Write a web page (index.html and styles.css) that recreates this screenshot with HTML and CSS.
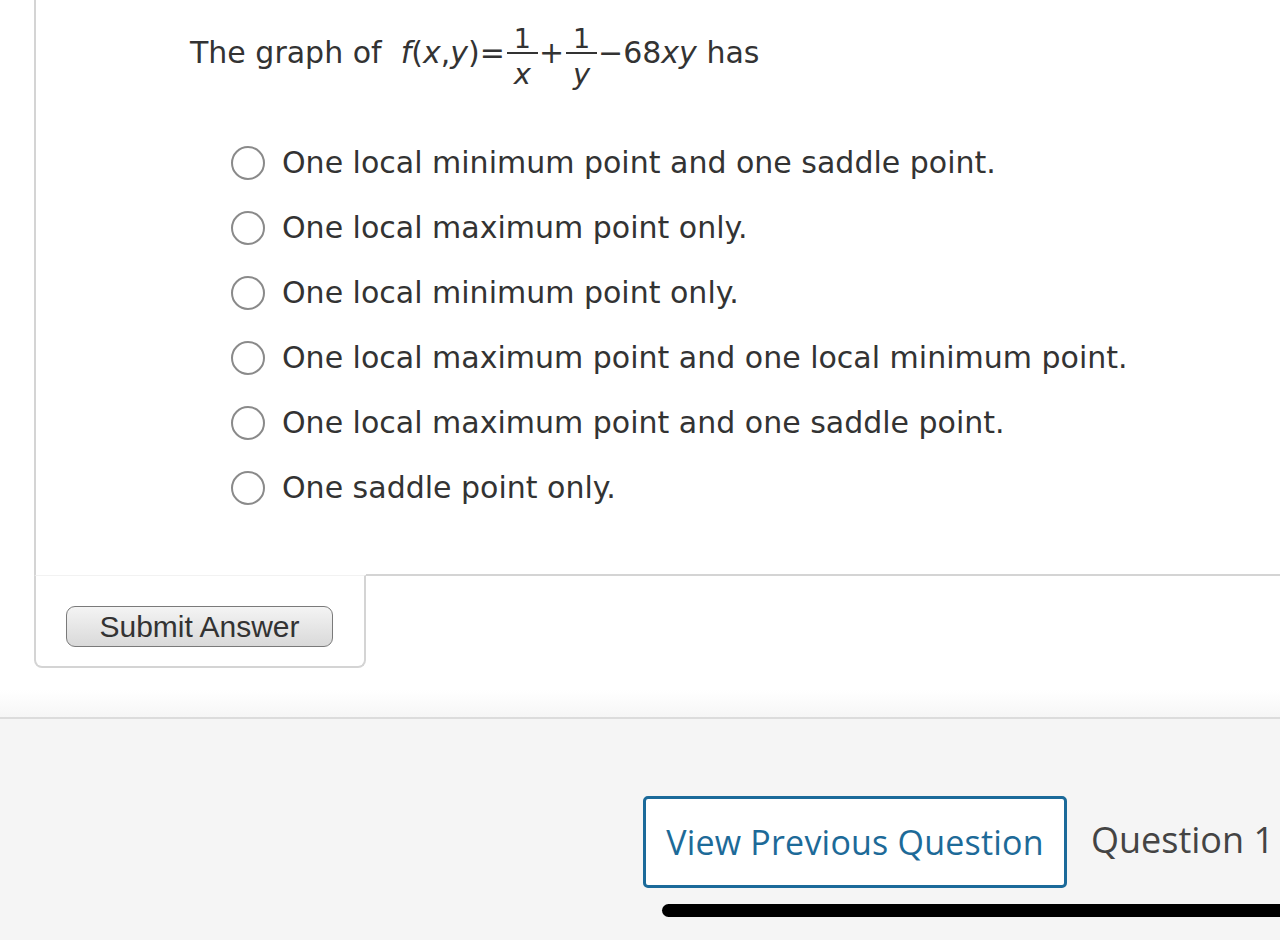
FILE: index.html
```html
<!DOCTYPE html>
<html>
<head>
<meta charset="utf-8">
<link rel="stylesheet" href="styles.css">
</head>
<body>
<div class="top">
  <div class="card">
    <div class="question">
      <p class="qtext">The graph of&nbsp; <i>f</i>(<i>x</i>,<i>y</i>)=<span class="frac"><span class="num">1</span><span class="bar"></span><span class="den"><i>x</i></span></span>+<span class="frac"><span class="num">1</span><span class="bar"></span><span class="den"><i>y</i></span></span>−68<i>xy</i> has</p>
      <div class="options">
        <label class="opt"><span class="radio"></span><span>One local minimum point and one saddle point.</span></label>
        <label class="opt"><span class="radio"></span><span>One local maximum point only.</span></label>
        <label class="opt"><span class="radio"></span><span>One local minimum point only.</span></label>
        <label class="opt"><span class="radio"></span><span>One local maximum point and one local minimum point.</span></label>
        <label class="opt"><span class="radio"></span><span>One local maximum point and one saddle point.</span></label>
        <label class="opt"><span class="radio"></span><span>One saddle point only.</span></label>
      </div>
    </div>
    <div class="submit-row">
      <div class="submit-box"><button class="submit">Submit Answer</button></div>
      <div class="filler"></div>
    </div>
  </div>
</div>
<div class="bottom">
  <div class="nav">
    <button class="prev">View Previous Question</button>
    <span class="qnum">Question 1</span>
  </div>
  <div class="progress"></div>
</div>
</body>
</html>
```

FILE: styles.css
```css
html, body {
  margin: 0;
  padding: 0;
}
body {
  width: 1280px;
  height: 940px;
  overflow: hidden;
  background: #f5f5f5;
  font-family: "DejaVu Sans", Verdana, sans-serif;
  color: #333;
}
.top {
  height: 717px;
  background: linear-gradient(to bottom, #fff 0, #fff 690px, #f6f6f6 717px);
  border-bottom: 2px solid #dcdcdc;
}
.card {
  margin-left: 34px;
}
.question {
  border-left: 2px solid #d4d4d4;
  padding: 25px 0 55px 154px;
  background: #fff;
}
.qtext {
  margin: 0;
  font-size: 30px;
  line-height: 40px;
  height: 105px;
}
.qtext i {
  font-style: italic;
}
.frac {
  display: inline-flex;
  flex-direction: column;
  align-items: stretch;
  vertical-align: 15px;
  margin: 0 1px 0 2px;
  min-width: 31px;
}
.num {
  display: block;
  font-size: 27px;
  line-height: 27px;
  text-align: center;
}
.den {
  display: block;
  font-size: 29px;
  line-height: 29px;
  text-align: center;
  margin-top: 6px;
}
.bar {
  display: block;
  height: 2px;
  background: #333;
}
.options {
  margin-left: 41px;
}
.opt {
  display: flex;
  align-items: center;
  height: 65px;
  font-size: 30px;
}
.radio {
  width: 30px;
  height: 30px;
  border: 2.5px solid #8a8a8a;
  border-radius: 50%;
  margin-right: 17px;
  flex: none;
}
.submit-row {
  display: flex;
  height: 93px;
}
.submit-box {
  width: 332px;
  border: 2px solid #d4d4d4;
  border-top: 1px solid #f2f2f2;
  border-radius: 0 0 8px 8px;
  background: #fff;
  padding: 30px 0 0 30px;
  box-sizing: border-box;
}
.submit {
  width: 267px;
  height: 41px;
  border: 1.5px solid #7a7a7a;
  border-radius: 9px;
  background: linear-gradient(to bottom, #f4f4f4, #d9d9d9);
  font-family: "Liberation Sans", Arial, sans-serif;
  font-size: 30px;
  color: #333;
  padding: 0;
  line-height: 38px;
}
.filler {
  flex: 1;
  border-top: 2px solid #d4d4d4;
  margin-top: -1px;
}
.bottom {
  padding-top: 77px;
}
.nav {
  display: flex;
  align-items: center;
  padding-left: 643px;
}
.prev {
  width: 424px;
  height: 92px;
  border: 3px solid #1b6a9a;
  border-radius: 5px;
  background: #fff;
  color: #1d6a98;
  font-family: "Open Sans", sans-serif;
  font-size: 34px;
  letter-spacing: 0.2px;
  padding: 0;
}
.qnum {
  margin-left: 24px;
  font-family: "Open Sans", sans-serif;
  font-size: 36px;
  color: #444;
  margin-top: -6px;
}
.progress {
  margin: 16px 0 0 662px;
  height: 13px;
  background: #000;
  border-radius: 7px 0 0 7px;
}
```
